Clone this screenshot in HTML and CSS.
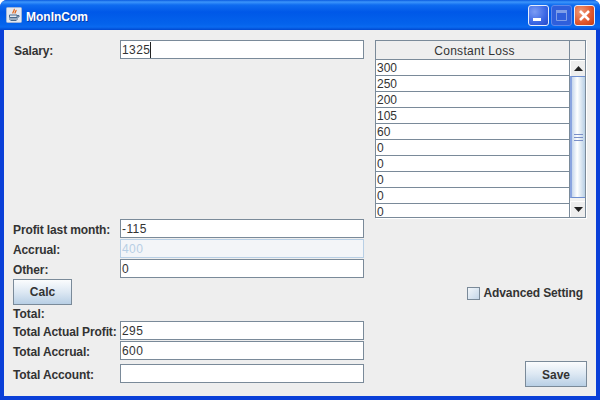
FILE: index.html
```html
<!DOCTYPE html>
<html lang="en">
<head>
    <meta charset="UTF-8">
    <title>MonInCom</title>
    <link rel="stylesheet" href="styles.css">
</head>
<body>
    <div class="window">
        <div class="titlebar">
            <svg class="app-icon" width="16" height="16" viewBox="0 0 16 16">
                <rect x="0.5" y="0.5" width="15" height="15" rx="1" fill="#e4e8f0" stroke="#9fb4d8"/>
                <path d="M8 2c1.500 1.500-2 2.500-1 4.500M10 3c.5 1.500-1.500 2-.8 3.500" fill="none" stroke="#e2661a" stroke-width="1.300"/>
                <path d="M3.500 8h7.500v2.500h-7.500zM11 8.500h2v1.500h-2M3 12h9M4.500 13.500h6" fill="none" stroke="#4a6a8c"/>
            </svg>
            <span class="title-text">MonInCom</span>
            <div class="title-buttons">
                <div class="title-btn">
                    <svg width="19" height="19" viewBox="0 0 19 19"><rect x="4" y="12" width="8" height="3" fill="#fff"/></svg>
                </div>
                <div class="title-btn disabled">
                    <svg width="19" height="19" viewBox="0 0 19 19"><path d="M4.500 4.500h10v10h-10z" fill="none" stroke="#7f9ee8"/><rect x="4" y="4" width="11" height="3" fill="#7f9ee8"/></svg>
                </div>
                <div class="title-btn close">
                    <svg width="19" height="19" viewBox="0 0 19 19"><path d="M5 5l9 9M14 5l-9 9" stroke="#fff" stroke-width="2.600"/></svg>
                </div>
            </div>
        </div>

        <div class="client">
            <div class="left-col">
                <div class="row">
                    <label class="lbl first">Salary:</label>
                    <div class="field">1325<span class="caret"></span></div>
                </div>
                <div class="spacer"></div>
                <div class="row tight">
                    <label class="lbl">Profit last month:</label>
                    <div class="field">-115</div>
                </div>
                <div class="row tight">
                    <label class="lbl">Accrual:</label>
                    <div class="field off">400</div>
                </div>
                <div class="row tight">
                    <label class="lbl">Other:</label>
                    <div class="field">0</div>
                </div>
                <button class="btn calc">Calc</button>
                <div class="total-head">Total:</div>
                <div class="row tight">
                    <label class="lbl">Total Actual Profit:</label>
                    <div class="field">295</div>
                </div>
                <div class="row tight">
                    <label class="lbl">Total Accrual:</label>
                    <div class="field">600</div>
                </div>
                <div class="row account">
                    <label class="lbl">Total Account:</label>
                    <div class="field"></div>
                </div>
            </div>

            <div class="right-col">
                <div class="table">
                    <div class="table-main">
                        <div class="table-head">Constant Loss</div>
                        <div class="cell">300</div>
                        <div class="cell">250</div>
                        <div class="cell">200</div>
                        <div class="cell">105</div>
                        <div class="cell">60</div>
                        <div class="cell">0</div>
                        <div class="cell">0</div>
                        <div class="cell">0</div>
                        <div class="cell">0</div>
                        <div class="cell last">0</div>
                    </div>
                    <div class="scroll">
                        <div class="scroll-corner"></div>
                        <div class="arrow"><svg width="9" height="5" viewBox="0 0 9 5"><path d="M4.500 0L9 5H0z" fill="#222"/></svg></div>
                        <div class="thumb"><span class="grip"></span></div>
                        <div class="track-end"></div>
                        <div class="arrow"><svg width="9" height="5" viewBox="0 0 9 5"><path d="M0 0h9L4.500 5z" fill="#222"/></svg></div>
                    </div>
                </div>
                <div class="check-row">
                    <span class="checkbox"></span>
                    <span class="lbl-inline">Advanced Setting</span>
                </div>
                <div class="save-row">
                    <button class="btn save">Save</button>
                </div>
            </div>
        </div>
    </div>
</body>
</html>
```

FILE: styles.css
```css
html, body {
    margin: 0;
    padding: 0;
}

body {
    width: 600px;
    height: 400px;
    overflow: hidden;
    font-family: "Liberation Sans", Arial, sans-serif;
    font-size: 12px;
    color: #333;
}

.window {
    width: 600px;
    height: 400px;
    box-sizing: border-box;
    display: flex;
    flex-direction: column;
    background: #0a3fd8;
    border-radius: 7px 7px 0 0;
    overflow: hidden;
}

.titlebar {
    height: 30px;
    flex: none;
    box-sizing: border-box;
    display: flex;
    align-items: center;
    padding: 0 5px 0 6px;
    background: linear-gradient(to bottom, #0a5be0 0, #3c95fb 2px, #0f6cf0 5px, #0058e8 12px, #0463ec 24px, #0a6af0 27px, #0048d0 30px);
}

.app-icon {
    margin-right: 4px;
}

.title-text {
    color: #fff;
    font-weight: bold;
    font-size: 12px;
    margin-top: 3px;
    text-shadow: 1px 1px 0 #0a3aa8;
}

.title-buttons {
    margin-left: auto;
    display: flex;
    gap: 2px;
}

.title-btn {
    width: 19px;
    height: 19px;
    border: 1px solid #e6edfc;
    border-radius: 3px;
    background: radial-gradient(circle at 30% 30%, #7c9cf4, #3a66e4 60%, #2448c8);
}

.title-btn svg {
    display: block;
}

.title-btn.disabled {
    border-color: #5e88ea;
    background: #2f5fdc;
}

.title-btn.close {
    background: radial-gradient(circle at 30% 30%, #f09a78, #e0562c 60%, #c23c14);
}

.client {
    flex: 1;
    margin: 0 4px 4px 4px;
    background: #eeeeee;
    display: flex;
    padding: 10px 9px 9px 9px;
    gap: 11px;
}

.left-col {
    width: 351px;
    margin-bottom: 4px;
    display: flex;
    flex-direction: column;
}

.row {
    display: flex;
    align-items: center;
    height: 19px;
}

.tight {
    margin-bottom: 1px;
}

.lbl {
    width: 107px;
    flex: none;
    padding-top: 2px;
    font-weight: bold;
    letter-spacing: -0.12px;
    white-space: nowrap;
}

.lbl.first {
    padding-left: 1px;
    width: 106px;
}

.field {
    flex: 1;
    height: 19px;
    box-sizing: border-box;
    border: 1px solid #7a8a99;
    background: #fff;
    padding: 1px 0 0 1px;
    font-size: 12px;
    letter-spacing: 0.4px;
    display: flex;
    align-items: center;
}

.field.off {
    border-color: #b8cfe5;
    color: #b8cfe5;
    background: #f3f5f8;
}

.caret {
    width: 1px;
    height: 16px;
    background: #222;
}

.spacer {
    flex: 1;
}

.btn {
    box-sizing: border-box;
    width: 59px;
    height: 26px;
    border: 1px solid #7a8a99;
    background: linear-gradient(to bottom, #fbfcfd, #dde8f3 50%, #b8cfe5);
    color: #333;
    font-family: inherit;
    font-size: 12px;
    font-weight: bold;
    padding: 0;
}

.calc {
    flex: none;
}

.total-head {
    font-weight: bold;
    height: 16px;
    line-height: 18px;
}

.account {
    margin-top: 3px;
}

.right-col {
    flex: 1;
    display: flex;
    flex-direction: column;
}

.table {
    width: 211px;
    height: 178px;
    flex: none;
    box-sizing: border-box;
    border: 1px solid #7a8a99;
    box-shadow: 1px 1px 0 #fff;
    display: flex;
    background: #fff;
}

.table-main {
    flex: 1;
    border-right: 1px solid #7a8a99;
}

.table-head {
    height: 18px;
    padding-left: 4px;
    line-height: 20px;
    text-align: center;
    letter-spacing: 0.3px;
    background: #eeeeee;
    border-bottom: 1px solid #7a8a99;
}

.cell {
    height: 15px;
    line-height: 16px;
    padding-left: 1px;
    border-bottom: 1px solid #7a8a99;
}

.cell.last {
    border-bottom: none;
    overflow: hidden;
}

.scroll {
    width: 15px;
    display: flex;
    flex-direction: column;
    background: #f2f2f2;
}

.scroll-corner {
    height: 19px;
    box-sizing: border-box;
    background: #eeeeee;
    border-bottom: 1px solid #7a8a99;
    flex: none;
}

.arrow {
    height: 16px;
    flex: none;
    box-sizing: border-box;
    display: flex;
    align-items: center;
    justify-content: center;
    background: #eeeeee;
    border-top: 1px solid #fff;
    border-left: 1px solid #fff;
}

.thumb {
    flex: 1;
    box-sizing: border-box;
    border-top: 1px solid #6f8fd0;
    border-bottom: 1px solid #6f8fd0;
    border-left: 2px solid #8aa4e0;
    background: linear-gradient(to right, #c6d6ec, #ffffff 40%, #b8cfe5);
    display: flex;
    align-items: center;
    justify-content: center;
}

.grip {
    width: 9px;
    height: 5px;
    box-sizing: content-box;
    border-top: 1px solid #7a8fc8;
    border-bottom: 1px solid #7a8fc8;
    background: linear-gradient(#7a8fc8, #7a8fc8) center / 100% 1px no-repeat;
}

.track-end {
    height: 3px;
    flex: none;
}

.check-row {
    margin-top: 68px;
    align-self: flex-end;
    margin-right: 4px;
    display: flex;
    align-items: center;
    gap: 4px;
    height: 14px;
}

.checkbox {
    width: 13px;
    height: 13px;
    box-sizing: border-box;
    border: 1px solid #7a8a99;
    background: linear-gradient(135deg, #f2f6fa, #c4d6e8);
}

.lbl-inline {
    font-weight: bold;
    letter-spacing: -0.12px;
    white-space: nowrap;
}

.save-row {
    margin-top: auto;
    display: flex;
    justify-content: flex-end;
}

.save {
    width: 62px;
    padding-top: 2px;
}
```
